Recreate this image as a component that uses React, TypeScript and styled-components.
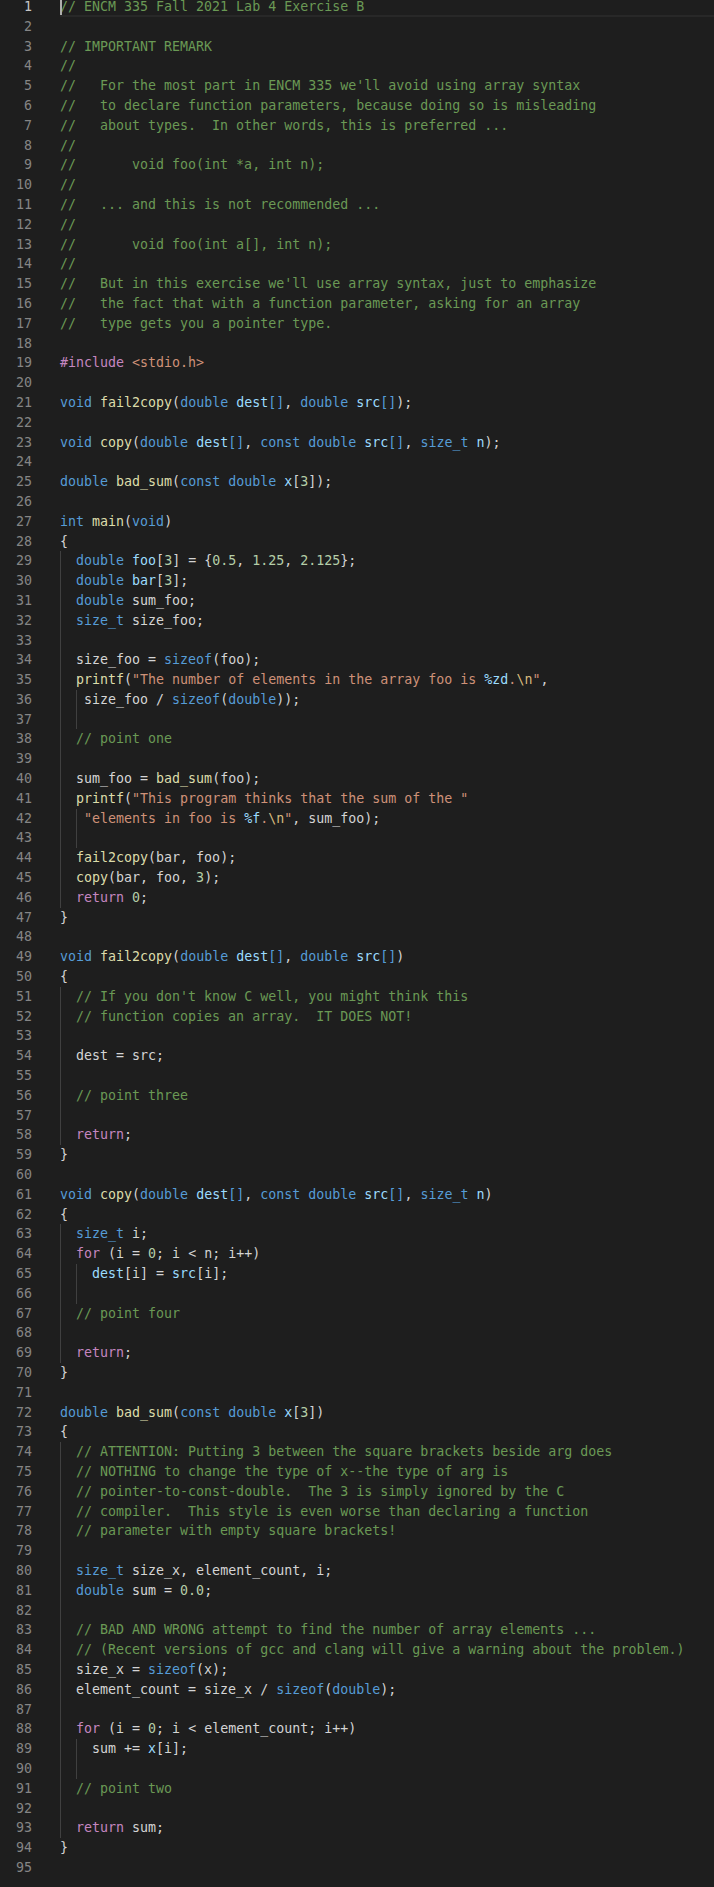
import React from "react";
import styled, { createGlobalStyle } from "styled-components";

const GlobalStyle = createGlobalStyle`
  html, body {
    margin: 0;
    padding: 0;
    background: #1e1e1e;
  }
  body {
    min-height: 100vh;
    overflow: hidden;
  }
`;

type Kind = "t" | "c" | "k" | "ctl" | "f" | "v" | "n" | "s" | "e" | "p";

const palette: Record<Kind, string> = {
  t: "#d4d4d4",
  c: "#6a9955",
  k: "#569cd6",
  ctl: "#c586c0",
  f: "#dcdcaa",
  v: "#9cdcfe",
  n: "#b5cea8",
  s: "#ce9178",
  e: "#d7ba7d",
  p: "#9cdcfe",
};

const Editor = styled.div`
  display: flex;
  flex-direction: column;
  margin-top: -3px;
  font-family: "DejaVu Sans Mono", "Liberation Mono", monospace;
  font-size: 13.3px;
  line-height: 19.8px;
  color: #d4d4d4;
  background: #1e1e1e;
  min-height: 1890px;
`;

const Row = styled.div`
  display: flex;
  height: 19.8px;
`;

const LineNumber = styled.div<{ $active: boolean }>`
  width: 32px;
  flex: none;
  text-align: right;
  color: ${(p) => (p.$active ? "#c6c6c6" : "#858585")};
`;

const guideBg = (n: number) => {
  if (n === 0) return "none";
  const parts: string[] = [];
  for (let i = 0; i < n; i++) {
    parts.push(`linear-gradient(#404040, #404040) ${i * 16}px 0 / 1px 100% no-repeat`);
  }
  return parts.join(", ");
};

const Code = styled.div<{ $guides: number; $current: boolean }>`
  position: relative;
  flex: 1;
  margin-left: 28px;
  white-space: pre;
  background: ${(p) => guideBg(p.$guides)};
  box-shadow: ${(p) => (p.$current ? "inset 0 2px #282828, inset 0 -2px #282828" : "none")};
`;

const Token = styled.span<{ $kind: Kind }>`
  color: ${(p) => palette[p.$kind]};
`;

const Cursor = styled.span`
  position: absolute;
  left: 0;
  top: 1px;
  width: 2px;
  height: 17px;
  background: #aeafad;
`;

// markup: ⟦kind:text⟧ ; plain text otherwise
const SRC: string[] = [
  "⟦c:// ENCM 335 Fall 2021 Lab 4 Exercise B⟧",
  "",
  "⟦c:// IMPORTANT REMARK⟧",
  "⟦c://⟧",
  "⟦c://   For the most part in ENCM 335 we'll avoid using array syntax⟧",
  "⟦c://   to declare function parameters, because doing so is misleading⟧",
  "⟦c://   about types.  In other words, this is preferred ...⟧",
  "⟦c://⟧",
  "⟦c://       void foo(int *a, int n);⟧",
  "⟦c://⟧",
  "⟦c://   ... and this is not recommended ...⟧",
  "⟦c://⟧",
  "⟦c://       void foo(int a[], int n);⟧",
  "⟦c://⟧",
  "⟦c://   But in this exercise we'll use array syntax, just to emphasize⟧",
  "⟦c://   the fact that with a function parameter, asking for an array⟧",
  "⟦c://   type gets you a pointer type.⟧",
  "",
  "⟦ctl:#include⟧ ⟦s:<stdio.h>⟧",
  "",
  "⟦k:void⟧ ⟦f:fail2copy⟧(⟦k:double⟧ ⟦v:dest⟧⟦k:[]⟧, ⟦k:double⟧ ⟦v:src⟧⟦k:[]⟧);",
  "",
  "⟦k:void⟧ ⟦f:copy⟧(⟦k:double⟧ ⟦v:dest⟧⟦k:[]⟧, ⟦k:const⟧ ⟦k:double⟧ ⟦v:src⟧⟦k:[]⟧, ⟦k:size_t⟧ ⟦v:n⟧);",
  "",
  "⟦k:double⟧ ⟦f:bad_sum⟧(⟦k:const⟧ ⟦k:double⟧ ⟦v:x⟧[⟦n:3⟧]);",
  "",
  "⟦k:int⟧ ⟦f:main⟧(⟦k:void⟧)",
  "{",
  "  ⟦k:double⟧ ⟦v:foo⟧[⟦n:3⟧] = {⟦n:0.5⟧, ⟦n:1.25⟧, ⟦n:2.125⟧};",
  "  ⟦k:double⟧ ⟦v:bar⟧[⟦n:3⟧];",
  "  ⟦k:double⟧ sum_foo;",
  "  ⟦k:size_t⟧ size_foo;",
  "",
  "  size_foo = ⟦k:sizeof⟧(foo);",
  "  ⟦f:printf⟧(⟦s:\"The number of elements in the array foo is ⟧⟦p:%zd⟧⟦s:.⟧⟦e:\\n⟧⟦s:\"⟧,",
  "   size_foo / ⟦k:sizeof⟧(⟦k:double⟧));",
  "",
  "  ⟦c:// point one⟧",
  "",
  "  sum_foo = ⟦f:bad_sum⟧(foo);",
  "  ⟦f:printf⟧(⟦s:\"This program thinks that the sum of the \"⟧",
  "   ⟦s:\"elements in foo is ⟧⟦p:%f⟧⟦s:.⟧⟦e:\\n⟧⟦s:\"⟧, sum_foo);",
  "",
  "  ⟦f:fail2copy⟧(bar, foo);",
  "  ⟦f:copy⟧(bar, foo, ⟦n:3⟧);",
  "  ⟦ctl:return⟧ ⟦n:0⟧;",
  "}",
  "",
  "⟦k:void⟧ ⟦f:fail2copy⟧(⟦k:double⟧ ⟦v:dest⟧⟦k:[]⟧, ⟦k:double⟧ ⟦v:src⟧⟦k:[]⟧)",
  "{",
  "  ⟦c:// If you don't know C well, you might think this⟧",
  "  ⟦c:// function copies an array.  IT DOES NOT!⟧",
  "",
  "  dest = src;",
  "",
  "  ⟦c:// point three⟧",
  "",
  "  ⟦ctl:return⟧;",
  "}",
  "",
  "⟦k:void⟧ ⟦f:copy⟧(⟦k:double⟧ ⟦v:dest⟧⟦k:[]⟧, ⟦k:const⟧ ⟦k:double⟧ ⟦v:src⟧⟦k:[]⟧, ⟦k:size_t⟧ ⟦v:n⟧)",
  "{",
  "  ⟦k:size_t⟧ i;",
  "  ⟦ctl:for⟧ (i = ⟦n:0⟧; i < n; i++)",
  "    ⟦v:dest⟧[i] = ⟦v:src⟧[i];",
  "",
  "  ⟦c:// point four⟧",
  "",
  "  ⟦ctl:return⟧;",
  "}",
  "",
  "⟦k:double⟧ ⟦f:bad_sum⟧(⟦k:const⟧ ⟦k:double⟧ ⟦v:x⟧[⟦n:3⟧])",
  "{",
  "  ⟦c:// ATTENTION: Putting 3 between the square brackets beside arg does⟧",
  "  ⟦c:// NOTHING to change the type of x--the type of arg is⟧",
  "  ⟦c:// pointer-to-const-double.  The 3 is simply ignored by the C⟧",
  "  ⟦c:// compiler.  This style is even worse than declaring a function⟧",
  "  ⟦c:// parameter with empty square brackets!⟧",
  "",
  "  ⟦k:size_t⟧ size_x, element_count, i;",
  "  ⟦k:double⟧ sum = ⟦n:0.0⟧;",
  "",
  "  ⟦c:// BAD AND WRONG attempt to find the number of array elements ...⟧",
  "  ⟦c:// (Recent versions of gcc and clang will give a warning about the problem.)⟧",
  "  size_x = ⟦k:sizeof⟧(x);",
  "  element_count = size_x / ⟦k:sizeof⟧(⟦k:double⟧);",
  "",
  "  ⟦ctl:for⟧ (i = ⟦n:0⟧; i < element_count; i++)",
  "    sum += ⟦v:x⟧[i];",
  "",
  "  ⟦c:// point two⟧",
  "",
  "  ⟦ctl:return⟧ sum;",
  "}",
  "",
];

type Tok = { kind: Kind; text: string };

const parse = (line: string): Tok[] => {
  const out: Tok[] = [];
  const re = /⟦(\w+):([^⟧]*)⟧/g;
  let last = 0;
  let m: RegExpExecArray | null;
  while ((m = re.exec(line))) {
    if (m.index > last) out.push({ kind: "t", text: line.slice(last, m.index) });
    out.push({ kind: m[1] as Kind, text: m[2] });
    last = m.index + m[0].length;
  }
  if (last < line.length) out.push({ kind: "t", text: line.slice(last) });
  return out;
};

const plain = SRC.map((l) => l.replace(/⟦\w+:([^⟧]*)⟧/g, "$1"));

const levelOf = (s: string) => {
  const lead = s.length - s.trimStart().length;
  return Math.ceil(lead / 2);
};

const guides: number[] = plain.map((line, i) => {
  if (line.trim() !== "") return levelOf(line);
  let a = -1;
  for (let j = i - 1; j >= 0; j--) if (plain[j].trim() !== "") { a = levelOf(plain[j]); break; }
  let b = -1;
  for (let j = i + 1; j < plain.length; j++) if (plain[j].trim() !== "") { b = levelOf(plain[j]); break; }
  if (a < 0 || b < 0) return 0;
  if (a < b) return a + 1;
  if (a === b) return b;
  return b + 1;
});

export default function App() {
  return (
    <>
      <GlobalStyle />
      <Editor>
        {SRC.map((line, i) => (
          <Row key={i}>
            <LineNumber $active={i === 0}>{i + 1}</LineNumber>
            <Code $guides={guides[i]} $current={i === 0}>
              {i === 0 && <Cursor />}
              {parse(line).map((t, j) => (
                <Token key={j} $kind={t.kind}>
                  {t.text}
                </Token>
              ))}
            </Code>
          </Row>
        ))}
      </Editor>
    </>
  );
}
